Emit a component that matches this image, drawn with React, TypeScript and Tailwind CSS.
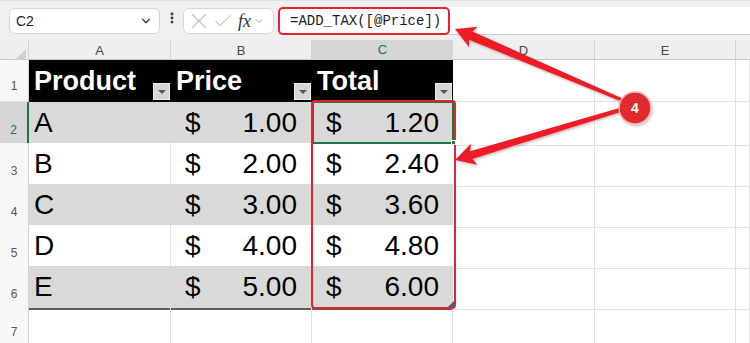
import React from 'react';
import { X, Check, ChevronDown, EllipsisVertical } from 'lucide-react';

const cols = 'grid grid-cols-[29px_142px_141px_141px_142px_141px_1fr]';

const data = [
  { n: 2, product: 'A', price: '1.00', total: '1.20' },
  { n: 3, product: 'B', price: '2.00', total: '2.40' },
  { n: 4, product: 'C', price: '3.00', total: '3.60' },
  { n: 5, product: 'D', price: '4.00', total: '4.80' },
  { n: 6, product: 'E', price: '5.00', total: '6.00' },
];

const FilterButton: React.FC = () => (
  <div className="absolute right-[1px] bottom-[2px] w-[17px] h-[17px] bg-[#d6d6d6] border border-[#ececec] flex items-center justify-center">
    <div className="w-0 h-0 border-l-[4px] border-r-[4px] border-t-[4px] border-l-transparent border-r-transparent border-t-[#555]" />
  </div>
);

const RowHeader: React.FC<{ n: number; active?: boolean }> = ({ n, active }) => (
  <div
    className={
      active
        ? 'flex items-end justify-center pb-[6px] text-[12px] text-[#217346] bg-[#d6d6d6] border-r-2 border-r-[#217346] border-b border-b-[#cfcfcf]'
        : 'flex items-end justify-center pb-[6px] text-[12px] text-[#555] bg-[#f7f7f7] border-r border-r-[#d2d2d2] border-b border-b-[#e3e3e3]'
    }
  >
    {n}
  </div>
);

const EmptyCell: React.FC = () => <div className="border-r border-b border-[#e1e1e1]" />;

const App: React.FC = () => {
  return (
    <div className="relative w-[750px] h-[343px] overflow-hidden bg-white font-['Liberation_Sans',Arial,sans-serif]">
      {/* formula bar */}
      <div className="h-[40px] bg-[#f2eff2] border-t border-[#e2dfe3] flex items-start">
        <div className="ml-[9px] mt-[7px] w-[151px] h-[26px] bg-white rounded-[6px] border border-[#d9d6da] flex items-center justify-between pl-[6px] pr-[6px]">
          <span className="text-[14px] text-[#1f1f1f]">C2</span>
          <ChevronDown className="w-[14px] h-[14px] text-[#333]" strokeWidth={2} />
        </div>
        <div className="w-[23px] h-[34px] flex items-center justify-center">
          <EllipsisVertical className="w-[14px] h-[14px] text-[#333]" strokeWidth={3} />
        </div>
        <div className="mt-[7px] w-[91px] h-[26px] bg-white rounded-[6px] border border-[#d9d6da] flex items-center pl-[2px]">
          <X className="w-[26px] h-[26px] text-[#bdbdbd]" strokeWidth={1} />
          <Check className="w-[22px] h-[22px] text-[#bdbdbd]" strokeWidth={1.1} />
          <div className="flex items-center ml-[4px]">
            <span className="font-['Liberation_Serif',serif] italic text-[18px] text-[#333] leading-none">fx</span>
            <ChevronDown className="w-[12px] h-[12px] text-[#888] ml-[2px]" strokeWidth={1.5} />
          </div>
        </div>
        <div className="ml-[4px] mt-[6px] flex-1 h-[28px] bg-white border-b border-[#cfcccf] relative">
          <div className="absolute left-0 top-0 w-[172px] h-[28px] border-2 border-[#e3242b] rounded-[5px] bg-white flex items-center pl-[10px]">
            <span className="font-['Liberation_Mono',monospace] text-[14px] text-[#1c1c1c]">=ADD_TAX([@Price])</span>
          </div>
        </div>
      </div>

      {/* column headers */}
      <div className={`${cols} h-[20px] bg-[#efefef] border-b border-[#c9c9c9] text-[13px] text-[#444]`}>
        <div className="relative border-r border-[#d2d2d2]">
          <div className="absolute right-[2px] bottom-[2px] w-0 h-0 border-b-[11px] border-l-[11px] border-b-[#cfcfcf] border-l-transparent" />
        </div>
        <div className="flex items-center justify-center border-r border-[#d2d2d2]">A</div>
        <div className="flex items-center justify-center border-r border-[#d2d2d2]">B</div>
        <div className="flex items-center justify-center bg-[#d6d6d6] text-[#217346] border-b-2 border-[#217346]">C</div>
        <div className="flex items-center justify-center border-r border-[#d2d2d2]">D</div>
        <div className="flex items-center justify-center border-r border-[#d2d2d2]">E</div>
        <div />
      </div>

      {/* row 1: table header */}
      <div className={`${cols} h-[42px]`}>
        <RowHeader n={1} />
        {['Product', 'Price', 'Total'].map((h) => (
          <div key={h} className="relative bg-black flex items-center pl-[5px]">
            <span className="text-white font-bold text-[27px] leading-none">{h}</span>
            <FilterButton />
          </div>
        ))}
        <EmptyCell />
        <EmptyCell />
        <EmptyCell />
      </div>

      {/* data rows */}
      {data.map((r, i) => {
        const gray = i % 2 === 0;
        const bg = gray ? 'bg-[#d9d9d9]' : 'bg-white';
        const sep = gray ? 'border-r-[#d9d9d9]' : 'border-r-[#e4e4e4]';
        return (
          <div key={r.n} className={`${cols} h-[41px]`}>
            <RowHeader n={r.n} active={r.n === 2} />
            <div className={`${bg} border-b-2 border-b-[#5c5c5c] border-r ${sep} flex items-center pl-[5px] text-[28px] text-black`}>
              {r.product}
            </div>
            {[r.price, r.total].map((v, k) => (
              <div
                key={k}
                className={`${bg} border-b-2 border-b-[#5c5c5c] ${k === 0 ? `border-r ${sep}` : ''} flex items-center justify-between pl-[14px] pr-[14px] text-[28px] text-black`}
              >
                <span>$</span>
                <span>{v}</span>
              </div>
            ))}
            <EmptyCell />
            <EmptyCell />
            <EmptyCell />
          </div>
        );
      })}

      {/* row 7 */}
      <div className={`${cols} h-[41px]`}>
        <RowHeader n={7} />
        <EmptyCell />
        <EmptyCell />
        <EmptyCell />
        <EmptyCell />
        <EmptyCell />
        <EmptyCell />
      </div>

      {/* active cell C2 */}
      <div className="absolute left-[312px] top-[101px] w-[142px] h-[43px] border-2 border-[#217346]" />
      {/* table resize handle */}
      <div className="absolute left-[448px] top-[301px] w-0 h-0 border-l-[6px] border-b-[6px] border-l-transparent border-b-[#2b5bb5]" />
      {/* red highlight box */}
      <div className="absolute left-[311px] top-[100px] w-[145px] h-[209px] border-2 border-[#e3242b] rounded-[4px]" />
      <div className="absolute left-[451px] top-[140px] w-[5px] h-[5px] bg-[#217346] border border-white" />

      {/* callout arrows */}
      <svg className="absolute left-0 top-0 pointer-events-none" width="750" height="343" viewBox="0 0 750 343">
        <defs>
          <filter id="sh" x="-10%" y="-10%" width="120%" height="120%">
            <feDropShadow dx="1" dy="1.5" stdDeviation="1.2" floodColor="#000" floodOpacity="0.25" />
          </filter>
        </defs>
        <g fill="#ee1d25" filter="url(#sh)">
          <polygon points="455,29 477.7,26.7 472.5,31.6 622.6,98.6 621.4,101.4 468.9,39.8 469.1,46.9" />
          <polygon points="455,160 470.9,143.7 470.1,151.3 619.4,108.1 620.6,111.9 472.5,158.9 477.3,164.7" />
        </g>
        <g filter="url(#sh)">
          <circle cx="635" cy="108" r="16" fill="#df2a2f" stroke="#f4b6b8" strokeWidth="1.5" />
        </g>
        <text x="635" y="113" textAnchor="middle" fill="#fff" fontSize="14" fontWeight="700" fontFamily="Liberation Sans, Arial, sans-serif">
          4
        </text>
      </svg>
    </div>
  );
};

export default App;
